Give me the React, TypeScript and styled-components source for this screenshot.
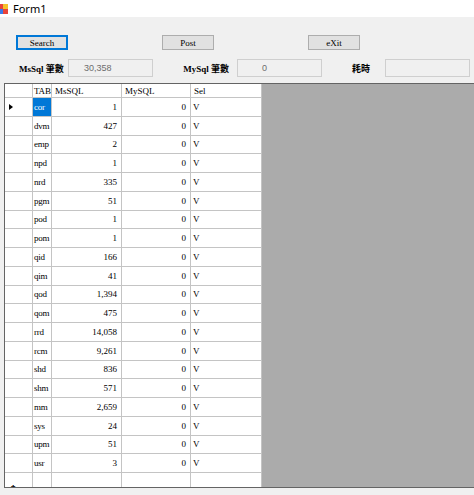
import React from 'react';
import styled, { createGlobalStyle } from 'styled-components';

const Global = createGlobalStyle`
  html, body {
    margin: 0;
    padding: 0;
    background: #f0f0f0;
  }
  body {
    width: 474px;
    height: 495px;
    overflow: hidden;
    font-family: "Liberation Serif", "Noto Sans CJK TC", serif;
    font-size: 9px;
    color: #000;
  }
`;

const Window = styled.div`
  display: flex;
  flex-direction: column;
  width: 474px;
  height: 495px;
  overflow: hidden;
  background: #f0f0f0;
`;

const TitleBar = styled.div`
  display: flex;
  align-items: center;
  gap: 5px;
  height: 17px;
  background: #fff;
  font-family: "Noto Sans", "Open Sans", sans-serif;
  font-size: 11px;
  margin-left: -2px;
`;

const ButtonRow = styled.div`
  display: flex;
  gap: 94px;
  padding: 18px 0 0 16px;
`;

const Button = styled.button<{ focused?: boolean }>`
  width: 52px;
  height: 15px;
  padding: 0;
  background: #e1e1e1;
  border: 1px solid ${p => (p.focused ? '#0078d7' : '#adadad')};
  box-shadow: ${p => (p.focused ? 'inset 0 0 0 1px #0078d7' : 'none')};
  font-family: "Liberation Serif", serif;
  font-size: 9px;
  color: #000;
  line-height: 12px;
`;

const InfoRow = styled.div`
  display: flex;
  align-items: center;
  padding: 9px 0 0 0;
  height: 18px;
`;

const Label = styled.span<{ w: number; left?: number; right?: number; align?: string }>`
  width: ${p => p.w}px;
  padding-left: ${p => p.left ?? 0}px;
  padding-right: ${p => p.right ?? 0}px;
  text-align: ${p => p.align ?? 'left'};
  box-sizing: border-box;
  font-size: 9px;
  font-weight: 600;
  white-space: nowrap;
`;

const Box = styled.div<{ indent: number }>`
  width: 85px;
  height: 18px;
  box-sizing: border-box;
  border: 1px solid #cfcfcf;
  background: #f0f0f0;
  color: #6d6d6d;
  padding-left: ${p => p.indent}px;
  display: flex;
  align-items: center;
  font-family: "Liberation Sans", sans-serif;
  font-size: 9px;
`;

const Grid = styled.div`
  display: flex;
  margin: 6px -10px 0 4px;
  height: 403px;
  border: 1px solid #646464;
  background: #ababab;
  overflow: hidden;
`;

const Table = styled.div`
  width: 257px;
  background: #fff;
  display: flex;
  flex-direction: column;
`;

const Row = styled.div<{ h: number }>`
  display: grid;
  grid-template-columns: 28px 19px 70px 69px 71px;
  height: ${p => p.h}px;
  flex-shrink: 0;
`;

const Cell = styled.div<{ align?: string; selected?: boolean; pad?: string }>`
  box-sizing: border-box;
  border-right: 1px solid #c4c4c4;
  border-bottom: 1px solid #c4c4c4;
  display: flex;
  align-items: center;
  justify-content: ${p => (p.align === 'right' ? 'flex-end' : 'flex-start')};
  padding: ${p => p.pad ?? '0 4px 0 3px'};
  overflow: hidden;
  white-space: nowrap;
  background: ${p => (p.selected ? '#0078d7' : '#fff')};
  color: ${p => (p.selected ? '#fff' : '#000')};
  font-size: 9px;
`;

const NameCell = styled(Cell)`
  padding: 0 0 0 1px;
  letter-spacing: -0.2px;
`;

const RowHead = styled(Cell)`
  padding: 0 0 0 4px;
`;

const Star = styled.span`
  font-family: "Liberation Sans", sans-serif;
  font-size: 11px;
  font-weight: bold;
  margin-top: 12px;
  margin-left: 2px;
`;

const Workspace = styled.div`
  flex: 1;
  background: #ababab;
`;

const rows: [string, string][] = [
  ['cor', '1'],
  ['dvm', '427'],
  ['emp', '2'],
  ['npd', '1'],
  ['nrd', '335'],
  ['pgm', '51'],
  ['pod', '1'],
  ['pom', '1'],
  ['qid', '166'],
  ['qim', '41'],
  ['qod', '1,394'],
  ['qom', '475'],
  ['rrd', '14,058'],
  ['rcm', '9,261'],
  ['shd', '836'],
  ['shm', '571'],
  ['mm', '2,659'],
  ['sys', '24'],
  ['upm', '51'],
  ['usr', '3'],
];

const FormIcon = () => (
  <svg width="10" height="10" viewBox="0 0 10 10">
    <rect x="0" y="0" width="5" height="5" fill="#e8433a" />
    <rect x="5" y="0" width="5" height="5" fill="#f5c22b" />
    <rect x="0" y="5" width="5" height="5" fill="#3a7be8" />
    <rect x="5" y="5" width="5" height="5" fill="#e8433a" />
  </svg>
);

const App = () => (
  <Window>
    <Global />
    <TitleBar>
      <FormIcon />
      <span>Form1</span>
    </TitleBar>
    <ButtonRow>
      <Button focused>Search</Button>
      <Button>Post</Button>
      <Button>eXit</Button>
    </ButtonRow>
    <InfoRow>
      <Label w={68} left={19}>MsSql 筆數</Label>
      <Box indent={15}>30,358</Box>
      <Label w={84} right={8} align="right">MySql 筆數</Label>
      <Box indent={24}>0</Box>
      <Label w={63} right={15} align="right">耗時</Label>
      <Box indent={0} />
    </InfoRow>
    <Grid>
      <Table>
        <Row h={14}>
          <Cell />
          <NameCell>TAB</NameCell>
          <Cell>MsSQL</Cell>
          <Cell>MySQL</Cell>
          <Cell>Sel</Cell>
        </Row>
        {rows.map(([name, count], i) => (
          <Row h={18.75} key={name}>
            <RowHead>
              {i === 0 && (
                <svg width="4" height="6" viewBox="0 0 4 6">
                  <polygon points="0,0 4,3 0,6" fill="#000" />
                </svg>
              )}
            </RowHead>
            <NameCell selected={i === 0}>{name}</NameCell>
            <Cell align="right">{count}</Cell>
            <Cell align="right">0</Cell>
            <Cell pad="0 0 0 2px">V</Cell>
          </Row>
        ))}
        <Row h={20}>
          <RowHead>
            <Star>*</Star>
          </RowHead>
          <Cell />
          <Cell />
          <Cell />
          <Cell />
        </Row>
      </Table>
      <Workspace />
    </Grid>
  </Window>
);

export default App;
